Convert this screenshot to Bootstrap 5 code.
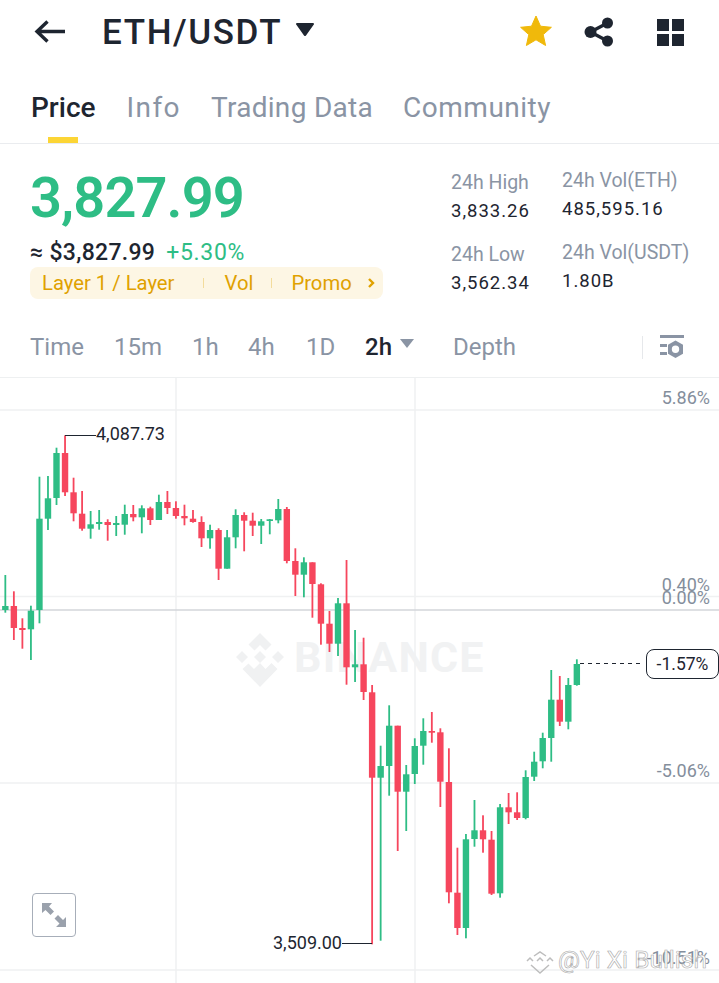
<!DOCTYPE html>
<html lang="en">
<head>
  <meta charset="UTF-8">
  <title>ETH/USDT</title>
  <meta name="viewport" content="width=device-width, initial-scale=1.0">
  <link href="https://cdn.jsdelivr.net/npm/bootstrap@5.3.0/dist/css/bootstrap.min.css" rel="stylesheet">
  <style>
    html, body { height: 983px; overflow: hidden; }
    body { font-family: Roboto, "Liberation Sans", sans-serif; color: #1e2530; background: #fff; }
    .top-bar { height: 64px; padding-left: 34px; }
    .pair-title { font-size: 35px; font-weight: 500; margin: 0 0 0 36px; letter-spacing: 1.6px; line-height: 1; }
    .title-caret { margin-left: 14px; }
    .top-icons { margin-left: auto; padding-right: 35px; }
    .star-ico { margin-bottom: 3px; }
    .share-ico { margin-left: 32px; }
    .grid-ico { margin-left: 43px; }
    .tab-bar { height: 80px; padding-left: 31px; gap: 30px; border-bottom: 1px solid #eaecef; }
    .tab-link { font-size: 28px; color: #8a94a4; padding: 0; height: 100%; line-height: 88px; position: relative; letter-spacing: .3px; }
    .tab-link.is-on { color: #1e2530; font-weight: 500; letter-spacing: 0; margin-right: 1px; }
    .tab-link.is-on::after { content: ""; position: absolute; left: 17px; width: 30px; bottom: 0; height: 6px; background: #fcd535; }
    .tab-link.tab-info { letter-spacing: 1.4px; }
    .tab-link.tab-comm { letter-spacing: .5px; }
    .stats { height: 169px; padding: 22px 0 0 30px; }
    .stat-left { width: 421px; }
    .big-price { font-size: 56px; font-weight: 600; color: #2ebd85; line-height: 64px; letter-spacing: -.9px; }
    .sub-price { font-size: 23px; line-height: 26px; margin-top: 10px; letter-spacing: .3px; font-weight: 500; }
    .sub-price .pct { color: #2ebd85; font-weight: 400; margin-left: 5px; letter-spacing: .7px; }
    .tag-strip { width: 353px; height: 32px; background: #fdf6e4; border-radius: 8px; color: #e0a100; font-size: 20.25px; padding-left: 12px; margin-top: 1px; }
    .tag-sep { width: 1px; height: 10px; background: #f3dc9c; }
    .sep-a { margin: 0 20px 0 29px; }
    .sep-b { margin: 0 19px 0 18px; }
    .tag-chev { margin-left: 14px; }
    .stat-grid { display: grid; grid-template-columns: 111px auto; row-gap: 14px; align-content: start; margin-top: 1px; }
    .stat-grid > .stat-cell:nth-child(odd) { padding-top: 2px; }
    .stat-name { font-size: 19.5px; color: #8a94a4; line-height: 28px; }
    .stat-val { font-size: 18.5px; line-height: 28px; letter-spacing: 1px; }
    .iv-row { height: 64px; padding: 4px 0 0 30px; font-size: 24px; color: #8a94a4; }
    .iv-row span { white-space: nowrap; }
    .iv-time { width: 84px; }
    .iv-15m { width: 78px; }
    .iv-1h { width: 56px; }
    .iv-4h { width: 58px; }
    .iv-1d { width: 59px; }
    .iv-2h { width: 35px; color: #1e2530; font-weight: 500; }
    .iv-depth { margin-left: 39px; }
    .iv-sep { width: 1px; height: 23px; background: #e6e8eb; }
    .iv-gear { margin-left: 17px; margin-right: 35px; }
    .chart-box { height: 606px; position: relative; border-top: 1px solid #eef0f1; }
    .chart-box svg.plot { display: block; position: absolute; left: 0; top: 0; }
    .axis-txt { font-size: 18px; fill: #848e9c; text-anchor: end; }
    .mark-txt { font-size: 18px; fill: #1e2530; }
    .wm-txt { font-size: 43px; font-weight: 700; fill: #f1f2f3; letter-spacing: 1.2px; }
    .now-pill { position: absolute; left: 646px; top: 271px; width: 73px; height: 30px; border: 1px solid #1e2530; border-radius: 8px; background: #fff; font-size: 17.5px; line-height: 28px; text-align: center; }
    .grow-btn { position: absolute; left: 32px; top: 515px; width: 44px; height: 44px; border: 1px solid #a7aeb9; border-radius: 4px; background: #fff; padding: 0; }
    .tag-name { position: absolute; left: 558px; top: 567px; font-size: 24.500px; line-height: 30px; color: #fff; -webkit-text-stroke: .6px #a9a9a9; white-space: nowrap; }
  </style>
</head>
<body>
  <div class="top-bar d-flex align-items-center">
    <svg width="32" height="26" viewBox="0 0 32 26">
      <path d="M31 12.500H4M13.500 2.500L3 12.500l10.500 10" fill="none" stroke="#1e2530" stroke-width="3.400"/>
    </svg>
    <h1 class="pair-title">ETH/USDT</h1>
    <svg class="title-caret mb-1" width="18" height="14" viewBox="0 0 18 14"><path d="M1 0h16a1 1 0 0 1 .8 1.600L10 12.500a1.300 1.300 0 0 1-2 0L.2 1.600A1 1 0 0 1 1 0z" fill="#1e2530"/></svg>
    <div class="top-icons d-flex align-items-center">
      <svg class="star-ico" width="32" height="32" viewBox="0 0 32 32"><path d="M16 1l4.500 10.200 10.900 1.100-8.200 7.300 2.400 10.900L16 24.800 6.400 30.500l2.400-10.900L.6 12.300l10.900-1.100z" fill="#f0b90b" stroke="#f0b90b" stroke-width="1" stroke-linejoin="round"/></svg>
      <svg class="share-ico" width="30" height="30" viewBox="0 0 30 30"><g fill="#1e2530"><circle cx="23.500" cy="6" r="5.500"/><circle cx="23.500" cy="24" r="5.500"/><circle cx="6.500" cy="15" r="6"/></g><path d="M23.500 6L6.500 15l17 9" fill="none" stroke="#1e2530" stroke-width="3.400"/></svg>
      <svg class="grid-ico" width="27" height="27" viewBox="0 0 27 27"><g fill="#1e2530"><rect width="12" height="12"/><rect x="15" width="12" height="12"/><rect y="15" width="12" height="12"/><rect x="15" y="15" width="12" height="12"/></g></svg>
    </div>
  </div>

  <nav class="tab-bar d-flex">
    <a class="tab-link is-on text-decoration-none">Price</a>
    <a class="tab-link tab-info text-decoration-none">Info</a>
    <a class="tab-link text-decoration-none">Trading Data</a>
    <a class="tab-link tab-comm text-decoration-none">Community</a>
  </nav>

  <section class="stats d-flex">
    <div class="stat-left">
      <div class="big-price">3,827.99</div>
      <div class="sub-price">≈ $3,827.99 <span class="pct">+5.30%</span></div>
      <div class="tag-strip d-flex align-items-center">
        <span>Layer 1 / Layer</span>
        <i class="tag-sep sep-a"></i>
        <span>Vol</span>
        <i class="tag-sep sep-b"></i>
        <span>Promo</span>
        <svg class="tag-chev" width="10" height="12" viewBox="0 0 10 12"><path d="M3 2l4 4-4 4" fill="none" stroke="#e0a100" stroke-width="2.400"/></svg>
      </div>
    </div>
    <div class="stat-grid">
      <div class="stat-cell"><div class="stat-name">24h High</div><div class="stat-val">3,833.26</div></div>
      <div class="stat-cell"><div class="stat-name">24h Vol(ETH)</div><div class="stat-val">485,595.16</div></div>
      <div class="stat-cell"><div class="stat-name">24h Low</div><div class="stat-val">3,562.34</div></div>
      <div class="stat-cell"><div class="stat-name">24h Vol(USDT)</div><div class="stat-val">1.80B</div></div>
    </div>
  </section>

  <div class="iv-row d-flex align-items-center">
    <span class="iv-time">Time</span>
    <span class="iv-15m">15m</span>
    <span class="iv-1h">1h</span>
    <span class="iv-4h">4h</span>
    <span class="iv-1d">1D</span>
    <span class="iv-2h">2h</span>
    <svg width="14" height="9" viewBox="0 0 14 9" class="mb-2"><path d="M0 0h14L7 9z" fill="#8a94a4"/></svg>
    <span class="iv-depth">Depth</span>
    <i class="iv-sep ms-auto"></i>
    <svg class="iv-gear" width="24" height="25" viewBox="0 0 24 25"><g fill="#8a94a4"><rect width="24" height="3"/><rect y="9" width="7" height="3"/><rect y="17" width="7" height="3"/><path fill-rule="evenodd" d="M15.500 5.500l7.500 4.300v8.900l-7.500 4.300L8 18.700V9.800zm0 5a3.700 3.700 0 1 0 0 7.400 3.700 3.700 0 0 0 0-7.400z"/></g></svg>
  </div>

  <div class="chart-box">
    <svg class="plot" id="plot" width="719" height="606" viewBox="0 378 719 606">
      <g stroke="#f0f1f2" stroke-width="1.500">
        <path d="M0 410H719M0 596.500H719M0 783H719M0 970H719M176 378V984M415 378V984" fill="none"/>
      </g>
      <path d="M0 610H719" stroke="#d3d6da" stroke-width="1.500"/>

      <g transform="translate(236 633) scale(.5)" fill="#f0f1f2">
        <path d="M48 0l23 23-12 12-11-11-11 11-12-12zM12 36l12 12-12 12L0 48zM84 36l12 12-12 12-12-12zM48 36l12 12-12 12-12-12zM25 61l11 11 12-12 11 12 12-12 12 12-35 36-35-36z"/>
      </g>
      <text class="wm-txt" x="294" y="672">BINANCE</text>

      <text class="axis-txt" x="710" y="404">5.86%</text>
      <text class="axis-txt" x="710" y="591">0.40%</text>
      <text class="axis-txt" x="710" y="604">0.00%</text>
      <text class="axis-txt" x="710" y="777">-5.06%</text>
      <text class="axis-txt" x="710" y="964">-10.51%</text>

      <g id="candles"></g>

      <path d="M65 435.500H96M342 943.500H372" stroke="#1e2530" stroke-width="1.200"/>
      <text class="mark-txt" x="96" y="440">4,087.73</text>
      <text class="mark-txt" x="273" y="949">3,509.00</text>
      <path d="M580 663.500H642" stroke="#1e2530" stroke-width="1" stroke-dasharray="4 4"/>

      <path d="M534 956l6-4 6 4M527 961l3-3 3 3M547 961l3-3 3 3M537 961l3-3 3 3M531 965l9 8 9-8" fill="none" stroke="#bdbdbd" stroke-width="1.500"/>
    </svg>
    <div class="now-pill">-1.57%</div>
    <button class="grow-btn d-flex align-items-center justify-content-center" type="button">
      <svg width="26" height="26" viewBox="0 0 26 26"><g fill="#9aa1ac"><path d="M1 1h10L8 4.500l5 5L9.500 13l-5-5L1 11z"/><path d="M25 25H15l3.500-3.500-5-5L17 13l5 5 3-3z"/></g></svg>
    </button>
    <div class="tag-name">@Yi Xi Bullish</div>
  </div>

  <script src="https://cdn.jsdelivr.net/npm/bootstrap@5.3.0/dist/js/bootstrap.bundle.min.js"></script>
  <script>
    // g/r, wick top, wick bottom, body top, body bottom
    const data = [
      ["r",594,610,600,610],
      ["g",575,612.7,606,610],["r",591.3,640,606,628],["r",618.3,648.7,628,630],["g",605.7,660,610.7,629.3],
      ["g",476.7,623.3,518.7,610],["g",476,530,498.3,518.7],["g",447.7,505,453,498],["r",435.3,496,453,492.3],
      ["r",477.7,521.3,492.3,513.3],["r",491,530.7,513.7,528.7],["g",511,538.7,524.3,528.7],["g",510,529.7,522,524],
      ["r",519.3,540.7,522,525],["g",516,536,523,525],["g",504.7,534.7,514,524.7],["r",505,521.3,514,517.3],
      ["g",505.3,533.3,508.3,517.3],["r",506.7,525,508.3,520],["g",494.7,520,502,520],["r",491,514,502,508],
      ["r",501.3,518.7,508,516],["r",504.7,525.3,516,518.3],["r",510,522.7,518.7,522],["r",516.3,547,522,538.3],
      ["g",524.7,548.7,530,538.3],["r",528.3,580,530,568.7],["g",530,568.7,537.3,568.7],["g",509.3,548.3,515,537.3],
      ["r",512.3,551.3,515,520.7],["r",512.7,536,520.7,525.7],["g",519,544,521.3,525.7],["g",519,534.3,519.3,521],
      ["g",499,523.3,509,520.3],["r",507,563.3,509,561],["r",548.3,596,561,574.7],["g",557.3,597.3,562.3,574.7],
      ["r",562.3,617.7,562.3,584],["r",583.3,644.7,584.3,623.7],["r",611,652,623.7,643.7],["g",598,656,603.3,643.7],
      ["r",560,684.7,603.3,667.3],["g",630,682,664.3,667.3],["r",637.7,700,664.3,692],["r",685,944.3,692.3,777.7],
      ["g",745.7,940.7,766,777.7],["g",705.3,795.7,725.7,766],["r",725.7,851,725.7,791.7],["g",765,831,774.3,791.7],
      ["g",738.3,784,746,774],["g",718.3,764.7,731,745.7],["r",712,742.7,731,732.7],["r",728.3,807,732.3,781.7],
      ["r",748.3,903.3,782,892.3],["r",847.7,935,892.7,928],["g",834,938.3,839.3,928],["g",800,846.7,830.3,839],
      ["r",815.3,852.7,830.3,839.3],["r",831,895,839.7,893.7],["g",804,897.7,807.3,893.3],["r",793,824,807.3,812.3],
      ["r",792.3,820,812.3,818],["g",770.3,819.3,777,818],["g",751.7,781,761.7,776.7],["g",732.7,768.3,738,761.3],
      ["g",670,761.7,699.7,738],["r",676,726,699.7,721.7],["g",678,729.3,685,721.7],["g",659.3,685.7,664,685]
    ];
    const colors = { g: "#2ebd85", r: "#f6465d" };
    let out = "";
    data.forEach((c, i) => {
      const x = -3.2 + 8.53 * i;
      out += `<rect x="${x - 0.9}" y="${c[1]}" width="1.8" height="${c[2] - c[1]}" fill="${colors[c[0]]}"/>`;
      out += `<rect x="${x - 3.2}" y="${c[3]}" width="6.4" height="${c[4] - c[3]}" fill="${colors[c[0]]}"/>`;
    });
    document.getElementById("candles").innerHTML = out;
  </script>
</body>
</html>
